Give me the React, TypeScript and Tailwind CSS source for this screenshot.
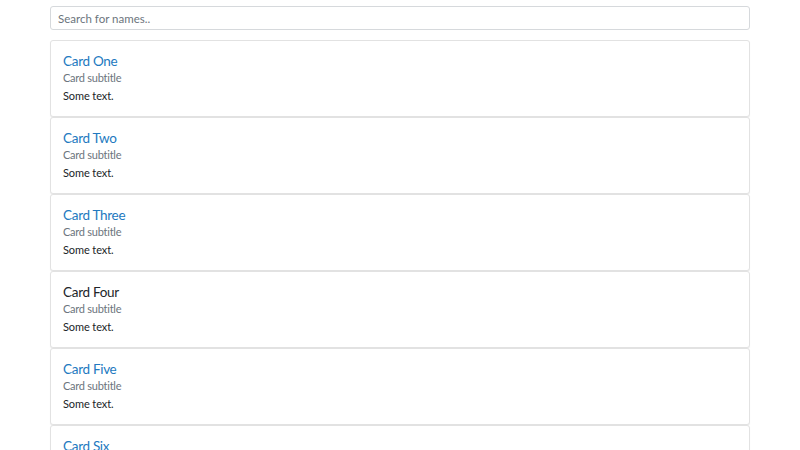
import React from 'react'

interface CardItem {
  title: string
  muted?: boolean
}

const cards: CardItem[] = [
  { title: 'Card One' },
  { title: 'Card Two' },
  { title: 'Card Three' },
  { title: 'Card Four', muted: true },
  { title: 'Card Five' },
  { title: 'Card Six' },
]

const Card: React.FC<{ item: CardItem }> = ({ item }) => {
  return (
    <div className="bg-white border border-[#e2e2e2] rounded-[3px] shadow-[0_1px_1px_rgba(0,0,0,0.07)] px-[12px] pt-[12px] pb-[12px]">
      <h5 className={`text-[13.5px] leading-[17px] tracking-[-0.3px] ${item.muted ? 'text-[#212529]' : 'text-[#2279c0]'}`}>{item.title}</h5>
      <h6 className="text-[11px] leading-[16px] tracking-[-0.25px] text-[#6c757d]">Card subtitle</h6>
      <p className="mt-[2px] text-[11px] leading-[16px] tracking-[-0.1px] text-[#212529]">Some text.</p>
    </div>
  )
}

const App: React.FC = () => {
  return (
    <div className="min-h-screen bg-white font-['Lato',sans-serif]">
      <div className="w-[700px] mx-auto pt-[6px]">
        <input
          type="text"
          placeholder="Search for names.."
          className="block w-full h-[24px] px-[7px] border border-[#d6d9dc] rounded-[3px] text-[11.5px] text-[#495057] placeholder:text-[#6c757d] outline-none"
        />
        <div className="mt-[10px] flex flex-col">
          {cards.map((c) => (
            <Card key={c.title} item={c} />
          ))}
        </div>
      </div>
    </div>
  )
}

export default App
